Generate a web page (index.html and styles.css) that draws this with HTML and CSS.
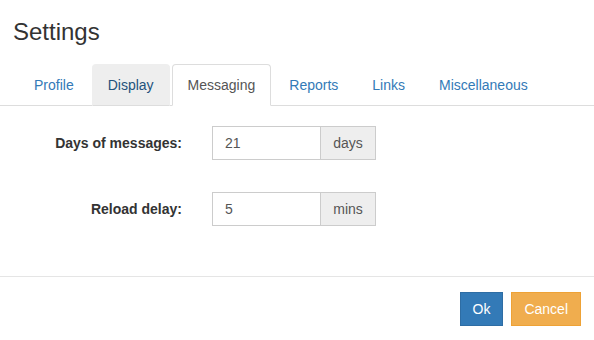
FILE: index.html
```html
<!DOCTYPE html>
<html lang="en">
<head>
    <meta charset="UTF-8">
    <meta name="viewport" content="width=device-width, initial-scale=1.0">
    <title>Settings</title>
    <link rel="stylesheet" href="styles.css">
</head>
<body>
    <div class="modal">
        <div class="modal-header">
            <h4 class="modal-title">Settings</h4>
        </div>

        <ul class="nav-tabs">
            <li><a href="#">Profile</a></li>
            <li class="hover"><a href="#">Display</a></li>
            <li class="active"><a href="#">Messaging</a></li>
            <li><a href="#">Reports</a></li>
            <li><a href="#">Links</a></li>
            <li><a href="#">Miscellaneous</a></li>
        </ul>

        <div class="tab-content">
            <form class="form-horizontal">
                <div class="form-group">
                    <label for="days">Days of messages:</label>
                    <div class="input-group">
                        <input type="text" id="days" value="21">
                        <span class="addon">days</span>
                    </div>
                </div>

                <div class="form-group">
                    <label for="reload">Reload delay:</label>
                    <div class="input-group">
                        <input type="text" id="reload" value="5">
                        <span class="addon">mins</span>
                    </div>
                </div>
            </form>
        </div>

        <div class="modal-footer">
            <button type="button" class="btn btn-primary">Ok</button>
            <button type="button" class="btn btn-warning">Cancel</button>
        </div>
    </div>
</body>
</html>
```

FILE: styles.css
```css
* {
    box-sizing: border-box;
}
body {
    margin: 0;
    font-family: "Liberation Sans", Arial, sans-serif;
    font-size: 14px;
    line-height: 20px;
    color: #333;
    background-color: #fff;
}
.modal-header {
    padding: 19px 13px 0;
}
.modal-title {
    margin: 0;
    font-size: 24px;
    font-weight: normal;
    line-height: 26px;
    color: #333;
}
.nav-tabs {
    display: flex;
    list-style: none;
    margin: 19px 0 0;
    padding: 0 0 0 18px;
    border-bottom: 1px solid #ddd;
}
.nav-tabs li {
    margin-right: 2px;
    margin-bottom: -1px;
}
.nav-tabs a {
    display: block;
    padding: 10px 15px;
    border: 1px solid transparent;
    border-radius: 4px 4px 0 0;
    color: #337ab7;
    text-decoration: none;
}
.nav-tabs li.hover a {
    background-color: #eee;
    border-color: #eee #eee #ddd;
    color: #23527c;
}
.nav-tabs li.active a {
    background-color: #fff;
    border-color: #ddd #ddd transparent;
    color: #555;
}
.tab-content {
    padding: 20px 0 50px;
}
.form-horizontal {
    display: flex;
    flex-direction: column;
    gap: 32px;
}
.form-group {
    display: grid;
    grid-template-columns: 182px 164px;
    column-gap: 30px;
}
.form-group label {
    padding-top: 7px;
    text-align: right;
    font-weight: bold;
}
.input-group {
    display: flex;
    height: 34px;
}
.input-group input {
    width: 109px;
    padding: 6px 12px;
    border: 1px solid #ccc;
    border-radius: 0;
    font: inherit;
    color: #555;
}
.addon {
    flex: 1;
    padding: 6px 12px;
    border: 1px solid #ccc;
    border-left: 0;
    background-color: #eee;
    color: #555;
    text-align: center;
}
.modal-footer {
    display: flex;
    justify-content: flex-end;
    gap: 8px;
    padding: 15px 13px 15px;
    border-top: 1px solid #e5e5e5;
}
.btn {
    height: 34px;
    padding: 6px 12px;
    border: 1px solid transparent;
    border-radius: 0;
    font: inherit;
    color: #fff;
    cursor: pointer;
}
.btn-primary {
    background-color: #337ab7;
    border-color: #2e6da4;
}
.btn-warning {
    background-color: #f0ad4e;
    border-color: #eea236;
}
```
